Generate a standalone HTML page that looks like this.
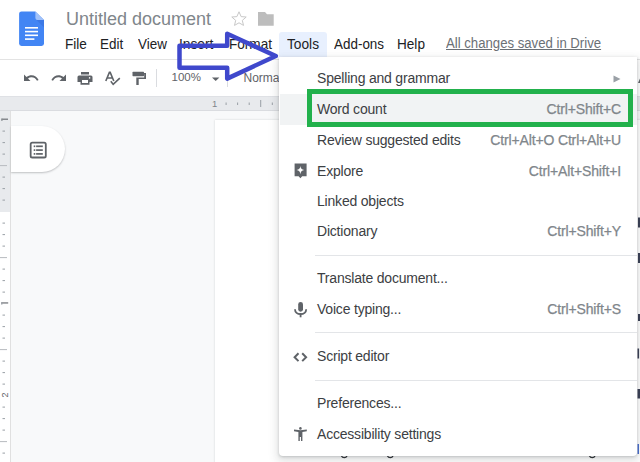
<!DOCTYPE html>
<html><head><meta charset="utf-8">
<style>
html,body{margin:0;padding:0;width:640px;height:462px;overflow:hidden;background:#fff;position:relative;font-family:"Liberation Sans",sans-serif;}
.abs{position:absolute;}
.t{position:absolute;white-space:nowrap;line-height:1;}
#title{left:66px;top:10px;font-size:18px;color:#80868b;}
.mb{font-size:14px;color:#202124;top:37px;transform-origin:0 0;}
#saved{left:446px;top:36px;font-size:14px;color:#6b7075;text-decoration:underline;transform:scaleX(0.94);transform-origin:0 0;}
#toolbar-border{left:0;top:59px;width:640px;height:1px;background:#e3e3e3;}
#ruler{left:0;top:97px;width:640px;height:14px;background:#e8eaed;}
#canvas{left:0;top:111px;width:640px;height:351px;background:#f8f9fa;}
#vruler{left:0;top:111px;width:10px;height:351px;background:#fff;border-right:1px solid #e0e0e0;}
#vruler-gray{left:0;top:111px;width:10px;height:101px;background:#e8eaed;}
#page{left:215px;top:120px;width:430px;height:343px;background:#fff;box-shadow:0 0 2px rgba(60,64,67,.2);}
#pill{left:11px;top:126px;width:54px;height:46px;background:#fff;border-radius:0 23px 23px 0;box-shadow:0 1px 2px rgba(60,64,67,.3);}
#menu{left:279px;top:57px;width:358px;height:399px;background:#fff;border-radius:0 0 4px 4px;box-shadow:0 4px 8px 3px rgba(60,64,67,.12),0 1px 3px rgba(60,64,67,.25);}
.mi{position:absolute;margin-top:-1px;left:38px;font-size:14px;color:#3c4043;letter-spacing:-0.2px;white-space:nowrap;line-height:1;}
.sc{position:absolute;margin-top:-1px;right:16px;font-size:14px;color:#80868b;letter-spacing:-0.15px;-webkit-text-stroke:0.25px #80868b;white-space:nowrap;line-height:1;}
.sep{position:absolute;left:36px;right:0;height:1px;background:#e3e5e8;}
</style></head><body>
<!-- logo -->
<svg class="abs" style="left:0;top:0" width="640" height="60">
  <path d="M21.5 11.4 H35.4 L44 20 V43.5 a2.4 2.4 0 0 1 -2.4 2.4 H21.5 a2.4 2.4 0 0 1 -2.4 -2.4 V13.8 a2.4 2.4 0 0 1 2.4 -2.4Z" fill="#4285f4"/>
  <path d="M36.5 20 L44 27.5 V20Z" fill="#3b73e0" opacity="0.7"/>
  <path d="M35.4 11.4 L44 20 H37.4 a2 2 0 0 1 -2 -2Z" fill="#a1c2fa"/>
  <rect x="25" y="27" width="13" height="1.6" fill="#fff"/>
  <rect x="25" y="30.8" width="13" height="1.6" fill="#fff"/>
  <rect x="25" y="34.5" width="13" height="1.6" fill="#fff"/>
  <rect x="25" y="38.3" width="9.4" height="1.6" fill="#fff"/>
  <!-- star -->
  <path d="M239 11.8 L241.1 16.6 L246.2 17 L242.3 20.4 L243.5 25.4 L239 22.8 L234.5 25.4 L235.7 20.4 L231.8 17 L236.9 16.6Z" fill="none" stroke="#c8c8c8" stroke-width="1" stroke-linejoin="round"/>
  <!-- folder -->
  <path d="M258 12 H265 L267 14.3 H273.7 V25.8 H258Z" fill="#bdbdbd"/>
</svg>
<div id="title" class="t">Untitled document</div>
<div class="t mb" style="left:65px;transform:scaleX(0.97)">File</div>
<div class="t mb" style="left:100px;transform:scaleX(0.96)">Edit</div>
<div class="t mb" style="left:138px;transform:scaleX(0.96)">View</div>
<div class="t mb" style="left:179px;transform:scaleX(0.98)">Insert</div>
<div class="t mb" style="left:229px;transform:scaleX(0.97)">Format</div>
<div class="abs" style="left:279px;top:32px;width:48px;height:25px;background:#e8f0fe;border-radius:3px 3px 0 0"></div>
<div class="t mb" style="left:287px;transform:scaleX(0.98)">Tools</div>
<div class="t mb" style="left:334px;transform:scaleX(0.96)">Add-ons</div>
<div class="t mb" style="left:397px;transform:scaleX(0.97)">Help</div>
<div id="saved" class="t">All changes saved in Drive</div>
<div id="toolbar-border" class="abs"></div>
<!-- toolbar icons -->
<svg class="abs" style="left:0;top:60px" width="640" height="37" viewBox="0 60 640 37">
  <g fill="#5f6368">
  <!-- undo -->
  <path d="M24 74.5 V81 H30.5 L28 78.5 C30.5 76.5 35 76.8 37 80.8 L38.6 80 C36.3 74.8 30.5 74 26.5 77 Z"/>
  <!-- redo -->
  <path d="M66 74.5 V81 H59.5 L62 78.5 C59.5 76.5 55 76.8 53 80.8 L51.4 80 C53.7 74.8 59.5 74 63.5 77 Z"/>
  <!-- print -->
  <rect x="81" y="72" width="8" height="2.5"/>
  <path d="M79 75.5 H91 a1.5 1.5 0 0 1 1.5 1.5 V82 H89.5 V84.7 H80.5 V82 H77.5 V77 a1.5 1.5 0 0 1 1.5 -1.5Z M82 80 V83 H88 V80Z"/>
  <!-- paint format -->
  <rect x="132.5" y="71.8" width="11.5" height="4.4" rx="0.6"/>
  <path d="M143.5 73 H146 V78.9 H138.7 V85 H136.3 V77.5 H144.2 V74.2 H143.5Z"/>
  </g>
  <!-- spellcheck -->
  <g fill="none" stroke="#5f6368" stroke-width="1.6">
    <path d="M105.8 81 L109.4 72.4 H110.2 L113.8 81 M107 78 H112.6"/>
    <path d="M110.8 81.2 L113.2 84.4 L119.8 78.2"/>
  </g>
<circle cx="89.6" cy="77.9" r="0.8" fill="#fff"/>
  <rect x="156" y="69" width="1" height="18" fill="#dadce0"/>
  <rect x="227" y="69" width="1" height="18" fill="#dadce0"/>
  <path d="M212 77.4 H219.4 L215.7 81Z" fill="#5f6368"/>
</svg>
<div class="t" style="left:171.5px;top:71.5px;font-size:11.5px;color:#5f6368">100%</div>
<div class="t" style="left:243.5px;top:72px;font-size:12px;color:#5f6368">Normal</div>
<div id="ruler" class="abs"></div>
<svg class="abs" style="left:0;top:0" width="640" height="120">
  <rect x="0" y="96" width="640" height="1" fill="#dfe1e5"/>
  <rect x="0" y="110" width="640" height="1" fill="#dadce0"/>
  <rect x="225.6" y="102.5" width="1" height="2.5" fill="#9aa0a6"/>
  <rect x="237.1" y="102.5" width="1" height="2.5" fill="#9aa0a6"/>
  <rect x="248.7" y="102.5" width="1" height="2.5" fill="#9aa0a6"/>
  <rect x="260.2" y="100" width="1" height="7" fill="#9aa0a6"/>
  <rect x="271.8" y="102.5" width="1" height="2.5" fill="#9aa0a6"/>
</svg>
<div class="t" style="left:212px;top:99px;font-size:9.5px;color:#80868b">1</div>
<div id="canvas" class="abs"></div>
<div id="page" class="abs"></div>
<div id="vruler-white" class="abs" style="left:0;top:111px;width:10px;height:351px;background:#fff;"></div>
<div id="vruler-gray" class="abs"></div>
<div class="abs" style="left:10px;top:111px;width:1px;height:351px;background:#e0e0e0"></div>
<svg class="abs" style="left:0;top:0" width="12" height="462">
  <rect x="2.5" y="130.6" width="2.5" height="1" fill="#9aa0a6"/>
  <rect x="2.5" y="142.1" width="2.5" height="1" fill="#9aa0a6"/>
  <rect x="2.5" y="153.6" width="2.5" height="1" fill="#9aa0a6"/>
  <rect x="0" y="165.1" width="7" height="1" fill="#b7bbbf"/>
  <rect x="2.5" y="176.6" width="2.5" height="1" fill="#9aa0a6"/>
  <rect x="2.5" y="188.1" width="2.5" height="1" fill="#9aa0a6"/>
  <rect x="2.5" y="199.6" width="2.5" height="1" fill="#9aa0a6"/>
  <rect x="2.5" y="222.6" width="2.5" height="1" fill="#9aa0a6"/>
  <rect x="2.5" y="234.1" width="2.5" height="1" fill="#9aa0a6"/>
  <rect x="2.5" y="245.6" width="2.5" height="1" fill="#9aa0a6"/>
  <rect x="0" y="257.1" width="7" height="1" fill="#b7bbbf"/>
  <rect x="2.5" y="268.6" width="2.5" height="1" fill="#9aa0a6"/>
  <rect x="2.5" y="280.1" width="2.5" height="1" fill="#9aa0a6"/>
  <rect x="2.5" y="291.6" width="2.5" height="1" fill="#9aa0a6"/>
  <rect x="2.5" y="314.6" width="2.5" height="1" fill="#9aa0a6"/>
  <rect x="2.5" y="326.1" width="2.5" height="1" fill="#9aa0a6"/>
  <rect x="2.5" y="337.6" width="2.5" height="1" fill="#9aa0a6"/>
  <rect x="0" y="349.1" width="7" height="1" fill="#b7bbbf"/>
  <rect x="2.5" y="360.6" width="2.5" height="1" fill="#9aa0a6"/>
  <rect x="2.5" y="372.1" width="2.5" height="1" fill="#9aa0a6"/>
  <rect x="2.5" y="383.6" width="2.5" height="1" fill="#9aa0a6"/>
  <rect x="2.5" y="406.6" width="2.5" height="1" fill="#9aa0a6"/>
  <rect x="2.5" y="418.1" width="2.5" height="1" fill="#9aa0a6"/>
  <rect x="2.5" y="429.6" width="2.5" height="1" fill="#9aa0a6"/>
  <rect x="0" y="441.1" width="7" height="1" fill="#b7bbbf"/>
  <rect x="2.5" y="452.6" width="2.5" height="1" fill="#9aa0a6"/>
  <rect x="1.5" y="118.6" width="6.5" height="1.2" fill="#6d7175"/><rect x="1.3" y="118.6" width="1.2" height="2.4" fill="#8a8f94"/>
  <rect x="1.2" y="302.4" width="7" height="1.1" fill="#5f6368"/><rect x="1.2" y="302.4" width="1.2" height="2.2" fill="#9aa0a6"/>
</svg>
<div class="t" style="left:0px;top:390px;width:10px;height:10px;font-size:9px;color:#5f6368;transform:rotate(-90deg);text-align:center;line-height:10px">2</div>
<div id="pill" class="abs"></div>
<svg class="abs" style="left:0;top:0" width="60" height="170">
  <rect x="30.66" y="142.65" width="15.14" height="14.85" rx="1.6" fill="none" stroke="#5f6368" stroke-width="1.8"/>
  <g fill="#5f6368">
  <rect x="33.7" y="145.45" width="1.6" height="1.7"/><rect x="36.1" y="145.45" width="6.7" height="1.7"/>
  <rect x="33.7" y="149.25" width="1.6" height="1.7"/><rect x="36.1" y="149.25" width="6.7" height="1.7"/>
  <rect x="33.7" y="153.05" width="1.6" height="1.7"/><rect x="36.1" y="153.05" width="6.7" height="1.7"/>
  </g>
</svg>
<!-- page text fragments -->
<svg class="abs" style="left:0;top:0" width="640" height="462">
  <g fill="none" stroke="#2b2f33" stroke-width="1.3">
    <path d="M341.5 456 C342.5 458.3 346 458.3 347 456"/>
    <path d="M387.5 456 C388.5 458.3 392 458.3 393 456"/>
    <path d="M589.5 456 C590.5 458.3 594 458.3 595 456"/>
  </g>
  <g fill="#3a3f55">
    <rect x="638" y="217.5" width="2" height="10"/>
    <rect x="638" y="253" width="2" height="10"/>
    <rect x="638" y="314" width="2" height="7"/>
    <rect x="637.5" y="348.5" width="1.6" height="10"/>
    <rect x="637.5" y="389" width="2.5" height="9.5"/>
  </g>
  <rect x="637.5" y="444" width="1.5" height="10" fill="#4a6fd0"/>
  <path d="M638 83 L640 78.5 V83Z" fill="#5f6368"/>
</svg>
<!-- menu -->
<div id="menu" class="abs">
  <div class="abs" style="left:1px;top:37px;width:357px;height:31px;background:#f1f3f4"></div>
  <div class="mi" style="top:15px">Spelling and grammar</div>
  <svg class="abs" style="left:334px;top:18px" width="8" height="8"><path d="M0.5 0.5 L7.5 4 L0.5 7.5Z" fill="#9aa0a6"/></svg>
  <div class="mi" style="top:46px">Word count</div><div class="sc" style="top:46px">Ctrl+Shift+C</div>
  <div class="mi" style="top:76.6px">Review suggested edits</div><div class="sc" style="top:76.6px">Ctrl+Alt+O Ctrl+Alt+U</div>
  <div class="mi" style="top:107.5px">Explore</div><div class="sc" style="top:107.5px">Ctrl+Alt+Shift+I</div>
  <div class="mi" style="top:138px">Linked objects</div>
  <div class="mi" style="top:168px">Dictionary</div><div class="sc" style="top:168px">Ctrl+Shift+Y</div>
  <div class="sep" style="top:198px"></div>
  <div class="mi" style="top:215px">Translate document...</div>
  <div class="mi" style="top:246px">Voice typing...</div><div class="sc" style="top:246px">Ctrl+Shift+S</div>
  <div class="sep" style="top:275px"></div>
  <div class="mi" style="top:293px">Script editor</div>
  <div class="sep" style="top:323px"></div>
  <div class="mi" style="top:339.5px">Preferences...</div>
  <div class="mi" style="top:370.5px">Accessibility settings</div>
</div>
<!-- menu icons -->
<svg class="abs" style="left:0;top:0" width="640" height="462">
  <g fill="#5f6368">
  <path d="M294.6 163.6 H306.6 V176.2 H302.2 L300.4 178.2 L298.6 176.2 H294.6Z M300.4 166 C300.8 168.6 301.6 169.5 304.3 170.1 C301.6 170.7 300.8 171.6 300.4 174.2 C300 171.6 299.2 170.7 296.5 170.1 C299.2 169.5 300 168.6 300.4 166Z" fill-rule="evenodd"/>
  <rect x="298.2" y="302.1" width="4.8" height="9.6" rx="2.4"/>
  <rect x="299.7" y="313" width="1.8" height="4.3"/>
  <circle cx="300.4" cy="428.4" r="1.3"/>
  <path d="M294 429.4 L300.4 430.3 L306.8 429.4 V431.2 L302.4 432 V441 H301 V437 H299.8 V441 H298.4 V432 L294 431.2Z"/>
  </g>
  <g fill="none" stroke="#5f6368" stroke-width="1.8">
  <path d="M295 309.3 C295 312.2 297.3 314.2 300.6 314.2 C303.9 314.2 306.2 312.2 306.2 309.3"/>
  </g>
  <g fill="none" stroke="#5f6368" stroke-width="2">
  <path d="M298.5 353.3 L294.6 357.2 L298.5 361.1 M302.2 353.3 L306.1 357.2 L302.2 361.1"/>
  </g>
</svg>
<!-- green box -->
<div class="abs" style="left:307px;top:89px;width:315.5px;height:28px;border:5px solid #22b14c;"></div>
<!-- arrow -->
<svg class="abs" style="left:0;top:0" width="640" height="100">
  <path d="M179.5 45.7 H227.2 V33.8 L275.8 56 L227.2 78.6 V67.8 H179.5Z" fill="none" stroke="#3f48cc" stroke-width="4.5" stroke-linejoin="round"/>
</svg>
</body></html>
